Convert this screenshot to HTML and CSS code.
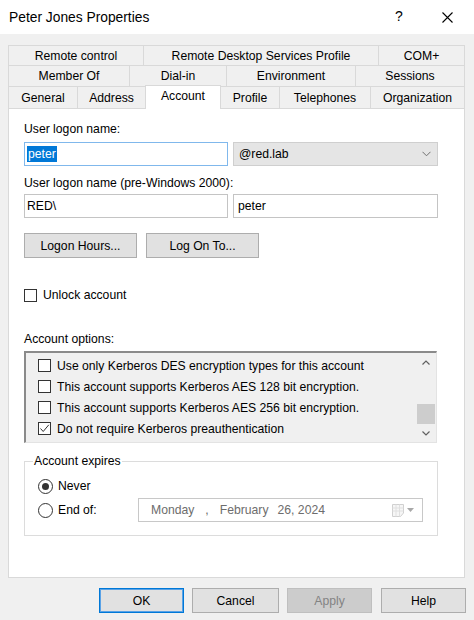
FILE: index.html
```html
<!DOCTYPE html>
<html>
<head>
<meta charset="utf-8">
<link rel="stylesheet" href="styles.css">
</head>
<body>
<div class="titlebar">
  <div class="title">Peter Jones Properties</div>
  <div class="tb-help">?</div>
  <div class="tb-close"><svg width="11" height="11" viewBox="0 0 11 11"><path d="M0.5 0.5 L10.5 10.5 M10.5 0.5 L0.5 10.5" stroke="#000" stroke-width="1.1" fill="none"/></svg></div>
</div>
<div class="tabs">
  <div class="tabrow r1">
    <div class="tab first w136">Remote control</div>
    <div class="tab w235">Remote Desktop Services Profile</div>
    <div class="tab w86">COM+</div>
  </div>
  <div class="tabrow r2">
    <div class="tab first w122">Member Of</div>
    <div class="tab w97">Dial-in</div>
    <div class="tab w129">Environment</div>
    <div class="tab w109">Sessions</div>
  </div>
  <div class="tabrow r3">
    <div class="tab first w70">General</div>
    <div class="tab w68">Address</div>
    <div class="tab active w75">Account</div>
    <div class="tab w59">Profile</div>
    <div class="tab w91">Telephones</div>
    <div class="tab w94">Organization</div>
  </div>
</div>
<div class="panel">
  <div class="lbl l1">User logon name:</div>
  <div class="fieldrow fr1">
    <div class="field focus"><span class="sel">peter</span></div>
    <div class="combo"><span>@red.lab</span><svg width="9" height="6" viewBox="0 0 9 6"><path d="M0.5 0.8 L4.5 4.8 L8.5 0.8" stroke="#707070" stroke-width="1" fill="none"/></svg></div>
  </div>
  <div class="lbl l2">User logon name (pre-Windows 2000):</div>
  <div class="fieldrow fr2">
    <div class="field">RED\</div>
    <div class="field f2">peter</div>
  </div>
  <div class="btnrow">
    <div class="btn b113">Logon Hours...</div>
    <div class="btn b113">Log On To...</div>
  </div>
  <div class="check unlock"><span class="box"></span><span>Unlock account</span></div>
  <div class="lbl l3">Account options:</div>
  <div class="listbox">
    <div class="items">
      <div class="check item"><span class="box"></span><span>Use only Kerberos DES encryption types for this account</span></div>
      <div class="check item"><span class="box"></span><span>This account supports Kerberos AES 128 bit encryption.</span></div>
      <div class="check item"><span class="box"></span><span>This account supports Kerberos AES 256 bit encryption.</span></div>
      <div class="check item"><span class="box"><svg width="11" height="11" viewBox="0 0 11 11"><path d="M1.5 5.5 L4.2 8.5 L9.8 1.8" stroke="#333" stroke-width="1" fill="none"/></svg></span><span>Do not require Kerberos preauthentication</span></div>
    </div>
    <div class="scrollbar">
      <div class="sbtn"><svg width="8" height="5" viewBox="0 0 8 5"><path d="M0.5 4.5 L4 1 L7.5 4.5" stroke="#606060" stroke-width="1.2" fill="none"/></svg></div>
      <div class="track"><div class="thumb"></div></div>
      <div class="sbtn"><svg width="8" height="5" viewBox="0 0 8 5"><path d="M0.5 0.5 L4 4 L7.5 0.5" stroke="#606060" stroke-width="1.2" fill="none"/></svg></div>
    </div>
  </div>
  <fieldset class="group">
    <legend>Account expires</legend>
    <div class="radiorow rr1"><span class="radio on"></span><span>Never</span></div>
    <div class="radiorow rr2">
      <div class="radiolbl"><span class="radio"></span><span>End of:</span></div>
      <div class="datepick">
        <span class="d1">Monday</span><span class="d2">,</span><span class="d3">February</span><span class="d4">26, 2024</span>
        <span class="dicons"><svg width="12" height="13" viewBox="0 0 12 13"><path d="M0.5 0.5 H11.5 V9 L8.5 12.5 H0.5 Z" stroke="#d0d0d0" stroke-width="1" fill="#f6f6f6"/><path d="M0.5 4 H11.5 M0.5 7 H11.5 M4 0.5 V12.5 M7.5 0.5 V12.5" stroke="#e0e0e0" stroke-width="1" fill="none"/></svg><svg width="7" height="4" viewBox="0 0 7 4"><path d="M0 0 H7 L3.5 4 Z" fill="#a8a8a8"/></svg></span>
      </div>
    </div>
  </fieldset>
</div>
<div class="footer">
  <div class="btn fb ok">OK</div>
  <div class="btn fb cancel">Cancel</div>
  <div class="btn fb apply">Apply</div>
  <div class="btn fb help">Help</div>
</div>
</body>
</html>
```
FILE: styles.css
```css
html, body {
  margin: 0;
  padding: 0;
}
body {
  background: #f0f0f0;
  font-family: "Liberation Sans", Arial, sans-serif;
  font-size: 12.2px;
  color: #000;
  width: 474px;
  height: 620px;
  overflow: hidden;
}
.titlebar {
  height: 34px;
  background: #fff;
  display: flex;
  align-items: center;
}
.title {
  flex: 1;
  margin-left: 9px;
  font-size: 13.8px;
  color: #000;
}
.tb-help {
  width: 20px;
  text-align: center;
  font-size: 14px;
  margin-right: 33px;
  margin-top: -2px;
}
.tb-close {
  width: 11px;
  height: 11px;
  margin-right: 21px;
  display: flex;
}
.tabs {
  margin-top: 11px;
  margin-left: 8px;
  width: 457px;
}
.tabrow {
  display: flex;
  align-items: flex-end;
}
.r1 { height: 20px; }
.r2 { height: 21px; }
.r3 { height: 22px; }
.tab {
  box-sizing: border-box;
  height: 100%;
  border-top: 1px solid #d9d9d9;
  border-right: 1px solid #d9d9d9;
  display: flex;
  align-items: center;
  justify-content: center;
  background: #f0f0f0;
  white-space: nowrap;
}
.tab.first { border-left: 1px solid #d9d9d9; }
.tab.active {
  background: #fff;
  height: 24px;
  margin-top: -2px;
  padding-bottom: 4px;
  margin-bottom: -1px;
  position: relative;
  border-left: 1px solid #d9d9d9;
  margin-left: -1px;
}
.w136 { width: 136px; }
.w235 { width: 235px; }
.w86 { width: 86px; }
.w122 { width: 122px; }
.w97 { width: 97px; }
.w129 { width: 129px; }
.w109 { width: 109px; }
.w70 { width: 70px; }
.w68 { width: 68px; }
.w75 { width: 76px; }
.w59 { width: 59px; }
.w91 { width: 91px; }
.w94 { width: 94px; }
.panel {
  box-sizing: border-box;
  margin-left: 8px;
  width: 457px;
  height: 470px;
  background: #fff;
  border: 1px solid #d9d9d9;
  padding: 0 15px;
}
.lbl {
  line-height: 14px;
  height: 14px;
  white-space: nowrap;
}
.l1 { margin-top: 13px; }
.l2 { margin-top: 10px; }
.l3 { margin-top: 30px; }
.fieldrow {
  display: flex;
  gap: 5px;
  height: 24px;
}
.fr1 { margin-top: 6px; }
.fr2 { margin-top: 4px; }
.field {
  box-sizing: border-box;
  width: 204px;
  height: 24px;
  border: 1px solid #c4c4c4;
  background: #fff;
  display: flex;
  align-items: center;
  padding-left: 2px;
}
.field.f2 { width: 205px; padding-left: 4px; }
.field.focus { border-color: #80b8ec; }
.sel {
  background: #0078d7;
  color: #fff;
  line-height: 16px;
  padding: 0 1px;
}
.combo {
  box-sizing: border-box;
  width: 205px;
  height: 24px;
  border: 1px solid #cfcfcf;
  background: #e5e5e5;
  display: flex;
  align-items: center;
  justify-content: space-between;
  padding: 0 6px 0 5px;
}
.btnrow {
  display: flex;
  gap: 9px;
  margin-top: 15px;
}
.btn {
  box-sizing: border-box;
  height: 25px;
  background: #e1e1e1;
  border: 1px solid #adadad;
  display: flex;
  align-items: center;
  justify-content: center;
}
.b113 { width: 113px; }
.check {
  display: flex;
  align-items: center;
  gap: 6px;
  white-space: nowrap;
}
.box {
  box-sizing: border-box;
  width: 13px;
  height: 13px;
  border: 1px solid #333;
  background: #fff;
  display: flex;
  align-items: center;
  justify-content: center;
  flex: none;
}
.unlock {
  margin-top: 30px;
  height: 14px;
}
.listbox {
  box-sizing: border-box;
  margin-top: 5px;
  width: 413px;
  height: 92px;
  background: #f0f0f0;
  border-top: 2px solid #8a8a8a;
  border-left: 2px solid #8a8a8a;
  border-right: 1px solid #e3e3e3;
  border-bottom: 1px solid #e3e3e3;
  display: flex;
}
.items {
  flex: 1;
  padding-left: 12px;
  padding-top: 2px;
}
.item {
  height: 21px;
}
.scrollbar {
  width: 18px;
  display: flex;
  flex-direction: column;
  margin-right: 1px;
}
.sbtn {
  height: 18px;
  display: flex;
  align-items: center;
  justify-content: center;
}
.track {
  flex: 1;
  display: flex;
  flex-direction: column;
  justify-content: flex-end;
}
.thumb {
  height: 20px;
  background: #cdcdcd;
}
.group {
  margin: 11px 0 0 0;
  padding: 0 0 13px 13px;
  width: 414px;
  box-sizing: border-box;
  border: 1px solid #dcdcdc;
  min-width: 0;
}
.group legend {
  padding: 0 1px;
  margin-left: -5px;
  line-height: 14px;
  height: 14px;
}
.radiorow {
  display: flex;
  align-items: center;
  height: 24px;
}
.rr1 { margin-top: 6px; gap: 5px; }
.radiolbl {
  width: 100px;
  display: flex;
  align-items: center;
  gap: 5px;
}
.radio {
  box-sizing: border-box;
  width: 15px;
  height: 15px;
  border: 1px solid #333;
  border-radius: 50%;
  background: #fff;
  display: flex;
  align-items: center;
  justify-content: center;
  flex: none;
}
.radio.on::after {
  content: "";
  width: 7px;
  height: 7px;
  border-radius: 50%;
  background: #333;
}
.datepick {
  box-sizing: border-box;
  width: 285px;
  height: 24px;
  border: 1px solid #c8c8c8;
  background: #fff;
  display: flex;
  align-items: center;
  color: #6d6d6d;
  padding-left: 12px;
  white-space: nowrap;
}
.d2 { margin-left: 11px; }
.d3 { margin-left: 11px; }
.d4 { margin-left: 9px; }
.dicons {
  margin-left: auto;
  margin-right: 8px;
  display: flex;
  align-items: center;
  gap: 3px;
}
.footer {
  display: flex;
  margin-top: 10px;
  margin-left: 99px;
  gap: 8px;
}
.fb { width: 85px; }
.fb.cancel { width: 87px; }
.fb.help { margin-left: 1px; }
.fb.ok { border: 1px solid #0078d7; box-shadow: inset 0 0 0 1px #5aa2e6; }
.fb.apply { background: #cccccc; border-color: #bfbfbf; color: #838383; }
```
